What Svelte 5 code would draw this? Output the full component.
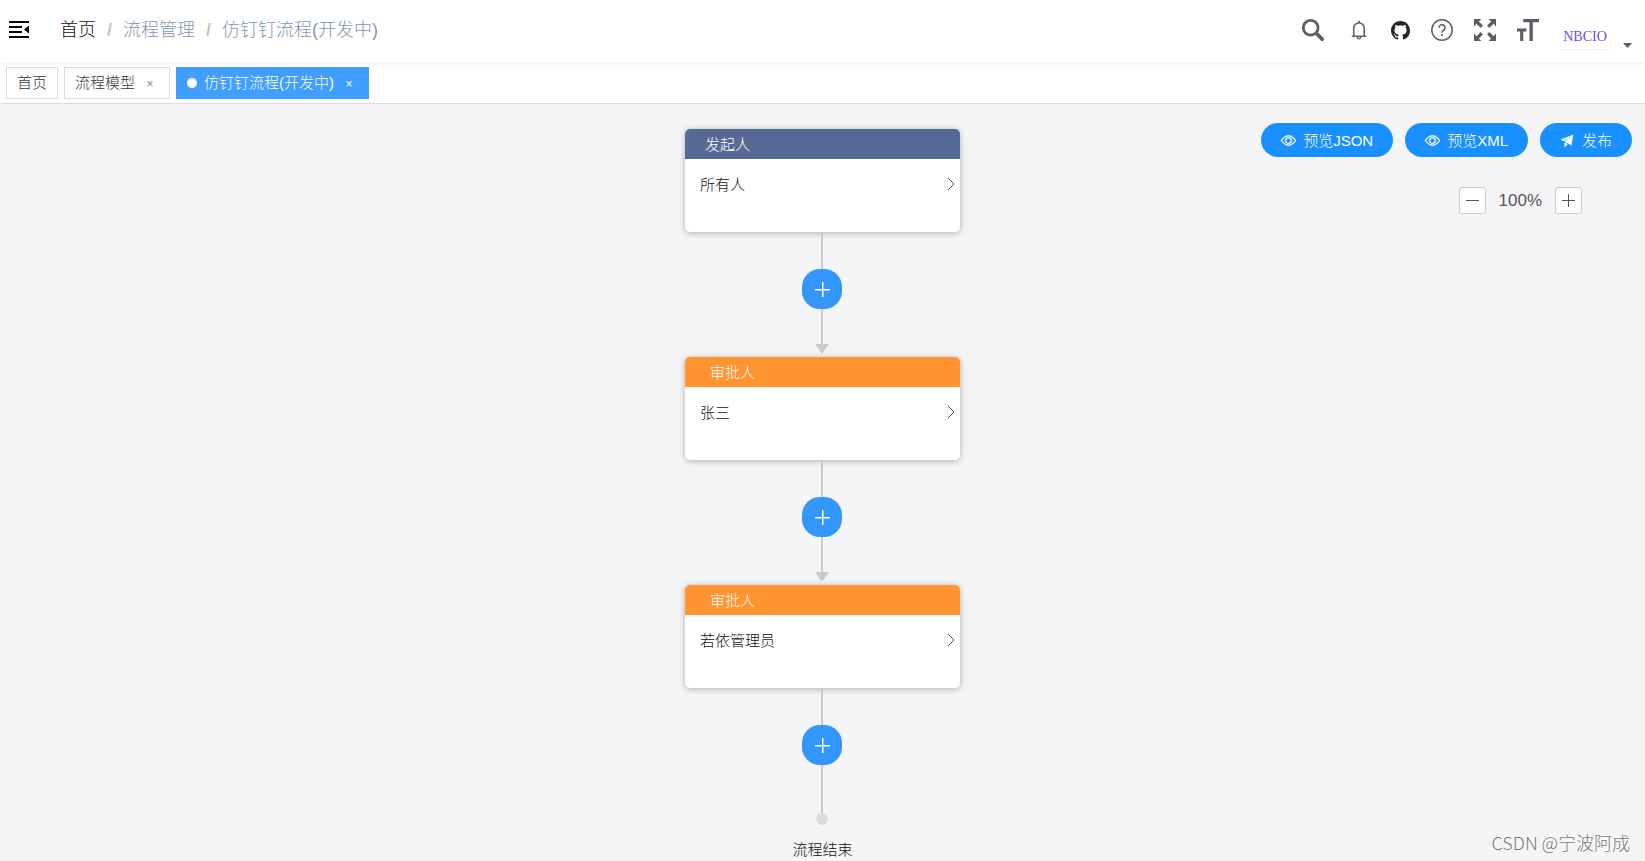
<script>
  const nodes = [
    { kind: 'starter', title: '发起人', body: '所有人' },
    { kind: 'approver', title: '审批人', body: '张三' },
    { kind: 'approver', title: '审批人', body: '若依管理员' }
  ];
  let zoom = $state(100);

  const eye =
    'M512 160c320 0 512 352 512 352S832 864 512 864 0 512 0 512s192-352 512-352zm0 64c-225.28 0-384.128 208.064-436.8 288 52.608 79.872 211.456 288 436.8 288 225.28 0 384.128-208.064 436.8-288-52.608-79.872-211.456-288-436.8-288zm0 64a224 224 0 1 1 0 448 224 224 0 0 1 0-448zm0 64a160.192 160.192 0 0 0-160 160c0 88.192 71.744 160 160 160s160-71.808 160-160-71.744-160-160-160z';
  const plane =
    'm64 448 832-320-128 704-446.08-243.328L832 192 242.816 545.472 64 448zm256 512V657.024L512 768 320 960z';
  const actions = [
    { label: '预览JSON', icon: eye },
    { label: '预览XML', icon: eye },
    { label: '发布', icon: plane }
  ];
</script>

<div class="page">
  <header class="navbar">
    <button class="icon-btn" aria-label="折叠菜单">
      <svg class="fold" viewBox="0 0 20 18" width="20" height="18">
        <path d="M0 0h20v2H0zM0 5h13v2H0zM0 10h13v2H0zM0 15h20v2H0zM20 4.5v8L15 8.5z" fill="#000" />
      </svg>
    </button>
    <nav class="crumbs" aria-label="breadcrumb">
      <a href="#home">首页</a>
      <span class="sep">/</span>
      <span>流程管理</span>
      <span class="sep">/</span>
      <span>仿钉钉流程(开发中)</span>
    </nav>
    <div class="tools">
      <button class="icon-btn" aria-label="搜索">
        <svg viewBox="0 0 128 128" width="22" height="22">
          <path d="M124.884 109.812L94.256 79.166c-.357-.357-.757-.629-1.129-.914a50.366 50.366 0 0 0 8.186-27.59C101.327 22.689 78.656 0 50.67 0 22.685 0 0 22.688 0 50.663c0 27.989 22.685 50.663 50.656 50.663 10.186 0 19.643-3.03 27.6-8.201.286.385.557.771.9 1.114l30.628 30.632a10.633 10.633 0 0 0 7.543 3.129c2.728 0 5.457-1.043 7.543-3.115 4.171-4.157 4.171-10.915.014-15.073M50.671 85.338C31.557 85.338 16 69.78 16 50.663c0-19.102 15.557-34.661 34.67-34.661 19.115 0 34.657 15.559 34.657 34.675 0 19.102-15.557 34.661-34.656 34.661" />
        </svg>
      </button>
      <button class="icon-btn bell" aria-label="通知">
        <svg viewBox="0 0 1024 1024" width="22" height="22">
          <path d="M816 768h-24V428c0-141.1-104.3-257.7-240-277.1V112c0-22.1-17.9-40-40-40s-40 17.9-40 40v38.9c-135.7 19.4-240 136-240 277.1v340h-24c-17.7 0-32 14.3-32 32v32c0 4.4 3.6 8 8 8h216c0 61.8 50.2 112 112 112s112-50.2 112-112h216c4.4 0 8-3.6 8-8v-32c0-17.7-14.3-32-32-32zM512 888c-26.5 0-48-21.5-48-48h96c0 26.5-21.5 48-48 48zM304 768V428c0-55.6 21.6-107.8 60.9-147.1S456.4 220 512 220c55.6 0 107.8 21.6 147.1 60.9S720 372.4 720 428v340H304z" />
        </svg>
      </button>
      <a class="icon-btn" href="#source" aria-label="GitHub">
        <svg viewBox="0 0 16 16" width="19" height="19">
          <path fill="#24292e" d="M8 0C3.58 0 0 3.58 0 8c0 3.54 2.29 6.53 5.47 7.59.4.07.55-.17.55-.38 0-.19-.01-.82-.01-1.49-2.01.37-2.53-.49-2.69-.94-.09-.23-.48-.94-.82-1.13-.28-.15-.68-.52-.01-.53.63-.01 1.08.58 1.23.82.72 1.21 1.87.87 2.33.66.07-.52.28-.87.51-1.07-1.78-.2-3.64-.89-3.64-3.95 0-.87.31-1.59.82-2.15-.08-.2-.36-1.02.08-2.12 0 0 .67-.21 2.2.82.64-.18 1.32-.27 2-.27s1.36.09 2 .27c1.53-1.04 2.2-.82 2.2-.82.44 1.1.16 1.92.08 2.12.51.56.82 1.27.82 2.15 0 3.07-1.87 3.75-3.65 3.95.29.25.54.73.54 1.48 0 1.07-.01 1.93-.01 2.2 0 .21.15.46.55.38A8.01 8.01 0 0 0 16 8c0-4.42-3.58-8-8-8z" />
        </svg>
      </a>
      <button class="icon-btn" aria-label="帮助">
        <svg viewBox="0 0 22 22" width="22" height="22" fill="none" stroke="#5a5e66">
          <circle cx="11" cy="11" r="10.2" stroke-width="1.5" />
          <path d="M8 8.7a3 3 0 1 1 4.6 2.5c-1.1.7-1.6 1.2-1.6 2.5" stroke-width="1.6" />
          <circle cx="11" cy="16" r="1.1" fill="#5a5e66" stroke="none" />
        </svg>
      </button>
      <button class="icon-btn" aria-label="全屏">
        <svg viewBox="0 0 128 128" width="22" height="22">
          <path d="M38.47 52L52 38.462l-23.648-23.67L43.209 0H0v43.137l14.757-14.865L38.47 52zm74.773 47.726L89.526 76 76 89.536l23.648 23.672L84.795 128H128V84.863l-14.757 14.863zM89.538 52l23.668-23.648L128 43.207V0H84.866l14.87 14.75L76 38.462 89.538 52zM38.46 76L14.792 99.651 0 84.794v43.173h43.137l-14.865-14.757L52 89.538 38.46 76z" />
        </svg>
      </button>
      <button class="icon-btn" aria-label="字号">
        <svg viewBox="0 0 128 128" width="22" height="22">
          <path d="M0 54.857h54.796v18.286H36.531V128H18.265V73.143H0V54.857zm127.857-36.571H91.935V128H72.456V18.286H36.534V0h91.326v18.286z" />
        </svg>
      </button>
      <button class="account">
        <span class="avatar">NBCIO</span>
        <svg class="caret" viewBox="0 0 9 5" width="9" height="5"><path d="M0 0h9L4.5 5z" /></svg>
      </button>
    </div>
  </header>

  <nav class="tabs" aria-label="标签页">
    <a class="tab" href="#home">首页</a>
    <a class="tab" href="#model">流程模型<span class="close">×</span></a>
    <a class="tab active" href="#ding"><i class="dot"></i>仿钉钉流程(开发中)<span class="close">×</span></a>
  </nav>

  <main class="canvas">
    <div class="flow">
      {#each nodes as node, i}
        <button class="card {node.kind}">
          <span class="card-title">{node.title}</span>
          <span class="card-body">
            {node.body}
            <svg viewBox="0 0 8 14" width="8" height="14" fill="none" stroke="#555">
              <path d="M1 1l6 6-6 6" />
            </svg>
          </span>
        </button>
        <div class="link" class:last={i === nodes.length - 1}>
          <button class="add" aria-label="添加节点">
            <svg viewBox="0 0 15 15" width="15" height="15">
              <path d="M7 0h1.5v7H15v1.5H8.500V15H7V8.500H0V7h7z" fill="#fff" />
            </svg>
          </button>
          {#if i < nodes.length - 1}
            <svg class="arrow" viewBox="0 0 14 10" width="14" height="10"><path d="M0 0h14L7 10z" /></svg>
          {:else}
            <span class="end-dot"></span>
          {/if}
        </div>
      {/each}
      <span class="end-text">流程结束</span>
    </div>

    <aside class="panel">
      <div class="actions">
        {#each actions as action}
          <button class="pill">
            <svg viewBox="0 0 1024 1024" width="15" height="15"><path d={action.icon} /></svg>
            <span>{action.label}</span>
          </button>
        {/each}
      </div>
      <div class="zoom">
        <button class="step" aria-label="缩小" onclick={() => (zoom -= 10)}>
          <svg viewBox="0 0 13 13" width="13" height="13"><path d="M0 6h13v1H0z" /></svg>
        </button>
        <span>{zoom}%</span>
        <button class="step" aria-label="放大" onclick={() => (zoom += 10)}>
          <svg viewBox="0 0 13 13" width="13" height="13"><path d="M6 0h1v6h6v1H7v6H6V7H0V6h6z" /></svg>
        </button>
      </div>
    </aside>
  </main>
  <div class="watermark">CSDN @宁波阿成</div>
</div>

<style>
  :global(body) {
    margin: 0;
    background: #f5f5f7;
  }
  .page {
    display: flex;
    flex-direction: column;
    min-height: 100vh;
    position: relative;
    font-family: 'Liberation Sans', 'Noto Sans CJK SC', sans-serif;
    font-size: 15px;
    font-weight: 300;
    color: #111;
  }
  button {
    font: inherit;
    color: inherit;
    border: 0;
    padding: 0;
    background: none;
    cursor: pointer;
  }
  a {
    color: inherit;
    text-decoration: none;
  }
  svg {
    display: block;
    flex: none;
  }
  .navbar {
    display: flex;
    align-items: center;
    height: 60px;
    padding: 0 13px 2px 9px;
    background: #fff;
    box-shadow: 0 1px 4px rgba(0, 21, 41, 0.08);
    position: relative;
  }
  .icon-btn {
    display: flex;
    fill: #5a5e66;
  }
  .crumbs {
    display: flex;
    align-items: center;
    gap: 11px;
    margin-left: 31px;
    font-size: 18px;
    line-height: 24px;
    color: #8496ae;
  }
  .crumbs a {
    color: #111;
  }
  .sep {
    color: #c0c4cc;
    font-weight: 700;
  }
  .tools {
    display: flex;
    align-items: center;
    gap: 21px;
    margin-left: auto;
  }
  .bell {
    margin-left: 3px;
  }
  .account {
    display: flex;
    align-items: flex-end;
    gap: 13px;
    margin-top: 18px;
    fill: #5a5e66;
  }
  .avatar {
    width: 50px;
    padding-bottom: 4px;
    border-bottom: 1px solid #f2f2f2;
    font-family: 'Liberation Serif', serif;
    font-size: 14px;
    line-height: 16px;
    font-weight: 400;
    color: #6a50dc;
  }
  .caret {
    margin-bottom: 2px;
  }
  .tabs {
    display: flex;
    gap: 6px;
    padding: 5px 6px 4px;
    background: #fff;
    border-bottom: 1px solid #d8dce5;
  }
  .tab {
    display: flex;
    align-items: center;
    height: 30px;
    padding: 0 10px;
    border: 1px solid #d8dce5;
    background: #fff;
    line-height: 28px;
    color: #303746;
  }
  .tab.active {
    background: #409eff;
    border-color: #409eff;
    color: #fff;
  }
  .dot {
    width: 10px;
    height: 10px;
    margin-right: 7px;
    border-radius: 50%;
    background: #fff;
  }
  .close {
    width: 18px;
    margin: 2px 0 0 6px;
    text-align: center;
    font-size: 12px;
    color: #8a8f99;
  }
  .active .close {
    color: #fff;
  }
  .canvas {
    flex: 1;
    display: grid;
    grid-template-columns: 1fr auto 1fr;
    align-items: start;
    background: #f5f5f7;
  }
  .flow {
    grid-column: 2;
    display: flex;
    flex-direction: column;
    align-items: center;
    padding-top: 25px;
  }
  .card {
    width: 275px;
    border-radius: 5px;
    overflow: hidden;
    background: #fff;
    text-align: left;
    box-shadow: 0 1px 6px rgba(0, 0, 0, 0.3);
  }
  .card-title {
    display: block;
    height: 30px;
    padding-left: 20px;
    line-height: 32px;
    color: #fff;
    background: #576a95;
  }
  .approver .card-title {
    padding-left: 25px;
    background: #ff9431;
  }
  .card-body {
    display: flex;
    justify-content: space-between;
    padding: 16px 5px 37px 15px;
    line-height: 20px;
  }
  .card-body svg {
    margin-top: 2px;
  }
  .link {
    display: flex;
    flex-direction: column;
    align-items: center;
    justify-content: space-between;
    height: 85px;
    padding: 37px 1px 3px 0;
    background: linear-gradient(#cacaca, #cacaca) 19px 0 / 2px 115px no-repeat;
  }
  .link.last {
    height: 100px;
    padding-bottom: 0;
    background-size: 2px 125px;
  }
  .add {
    display: grid;
    place-items: center;
    width: 40px;
    height: 40px;
    border-radius: 18px;
    background: #3296fa;
  }
  .arrow {
    fill: #cacaca;
  }
  .end-dot {
    width: 12px;
    height: 12px;
    border-radius: 50%;
    background: #dbdcdc;
  }
  .end-text {
    margin-top: 15px;
    line-height: 20px;
  }
  .panel {
    grid-column: 3;
    justify-self: end;
    padding: 19px 13px 0 0;
  }
  .actions {
    display: flex;
    gap: 12px;
  }
  .pill {
    display: flex;
    align-items: center;
    gap: 7px;
    height: 34px;
    padding: 0 20px 2px;
    border-radius: 17px;
    background: #1890ff;
    color: #fff;
    fill: #fff;
    white-space: nowrap;
  }
  .pill svg {
    margin-top: 2px;
    stroke: #fff;
    stroke-width: 24;
    overflow: visible;
  }
  .zoom {
    display: flex;
    align-items: center;
    justify-content: flex-end;
    gap: 13px;
    margin: 30px 50px 0 0;
    font-size: 17px;
    color: #555;
  }
  .step {
    display: grid;
    place-items: center;
    width: 27px;
    height: 27px;
    border: 1px solid #cacaca;
    border-radius: 3px;
    background: #fff;
    fill: #555;
  }
  .watermark {
    position: absolute;
    right: 15px;
    bottom: 8px;
    font-family: 'Noto Sans CJK SC', sans-serif;
    font-size: 18px;
    line-height: 22px;
    color: #777;
    text-shadow: -1px -1px 0 #fff;
    pointer-events: none;
  }
</style>
